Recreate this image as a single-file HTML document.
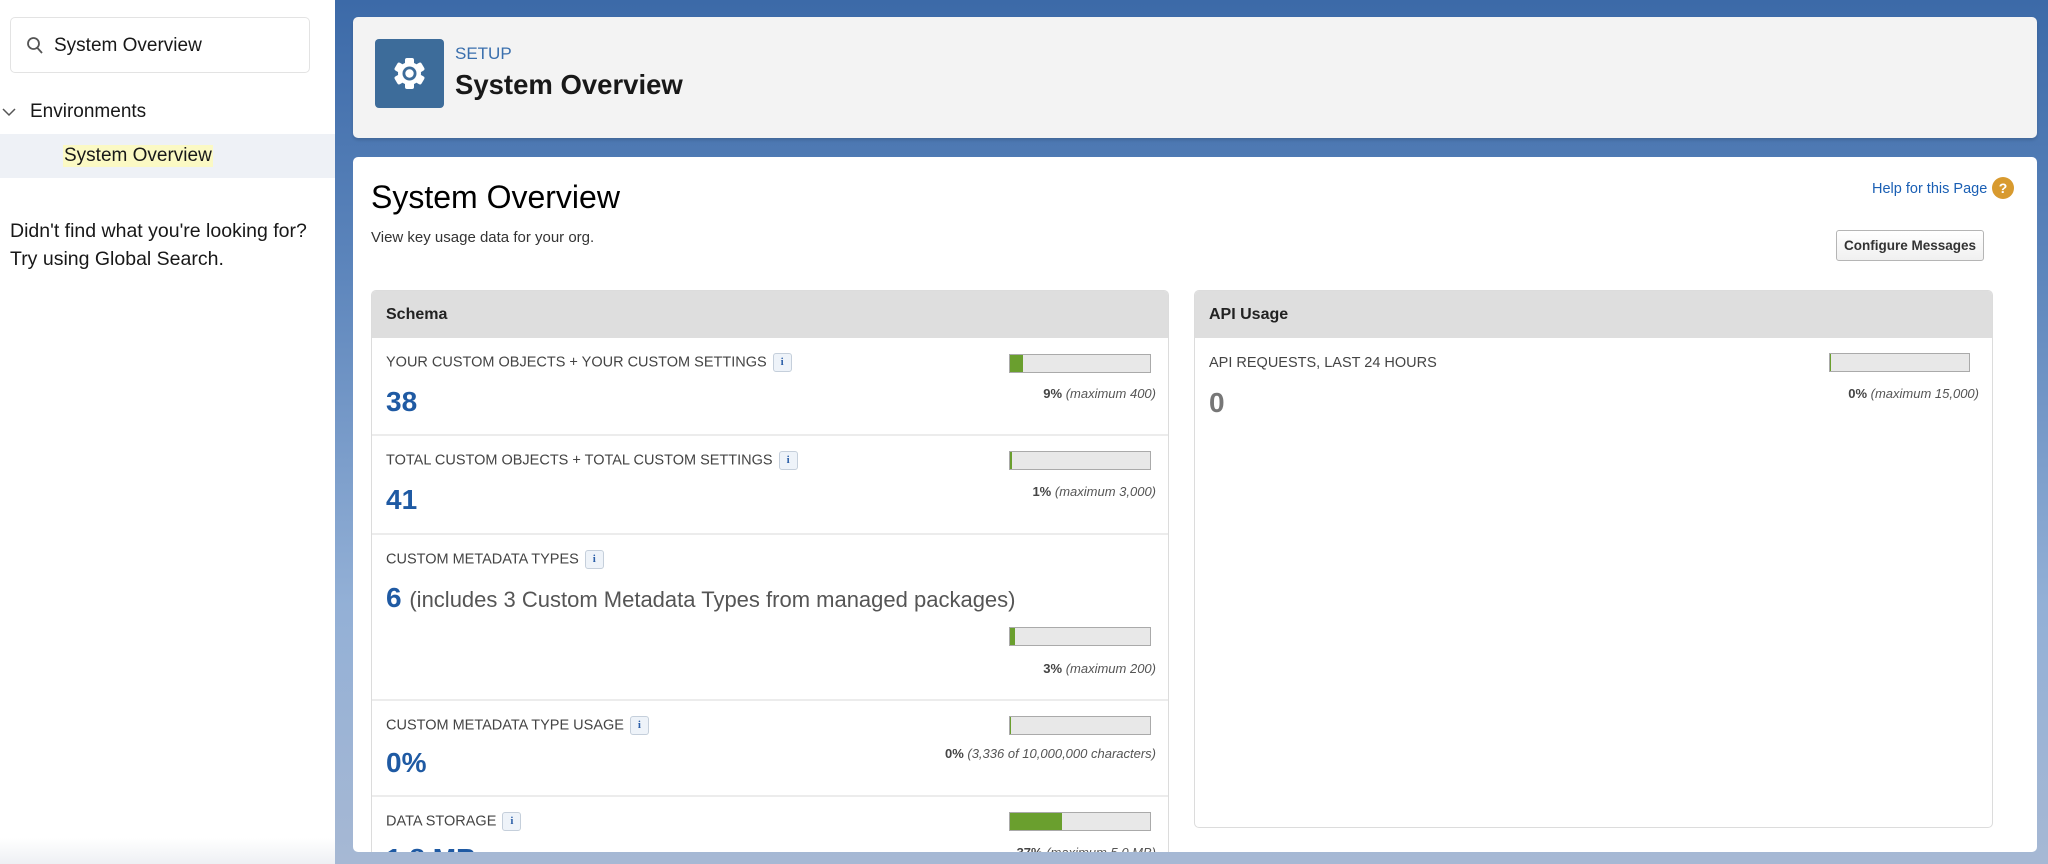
<!DOCTYPE html>
<html><head><meta charset="utf-8"><style>
*{box-sizing:border-box;margin:0;padding:0}
body{width:2048px;height:864px;overflow:hidden;font-family:"Liberation Sans",sans-serif;background:#fff;position:relative}
.side{position:absolute;left:0;top:0;width:335px;height:864px;background:#fff}
.search{position:absolute;left:10px;top:17px;width:300px;height:56px;border:1px solid #e3e3e3;border-radius:5px}
.search span{position:absolute;left:43px;top:17px;font-size:19px;color:#181818}
.env{position:absolute;left:30px;top:101px;font-size:19px;color:#181818}
.sel{position:absolute;left:0;top:134px;width:335px;height:44px;background:#eef1f6}
.sel span{position:absolute;left:63px;top:11px;font-size:19px;color:#181818;background:#fbf9c4;padding:0 1px}
.didnt{position:absolute;left:10px;top:217px;font-size:19.5px;line-height:28px;color:#181818}
.bg{position:absolute;left:335px;top:0;width:1713px;height:864px;background:linear-gradient(#3c6aa8 0%,#5b84bb 30%,#93b0d6 70%,#a6b8d4 100%)}
.hdr{position:absolute;left:353px;top:17px;width:1684px;height:121px;background:#f3f3f3;border-radius:5px;box-shadow:0 2px 3px rgba(0,0,0,.15)}
.gear{position:absolute;left:22px;top:22px;width:69px;height:69px;background:#3d6c9a;border-radius:4px}
.setup{position:absolute;left:102px;top:27px;font-size:17px;color:#3a6fad}
.htitle{position:absolute;left:102px;top:52px;font-size:27.5px;font-weight:bold;color:#181818}
.card{position:absolute;left:353px;top:157px;width:1684px;height:695px;background:#fff;border-radius:5px;overflow:hidden}
.h1{position:absolute;left:18px;top:22px;font-size:32px;color:#000}
.sub{position:absolute;left:18px;top:72px;font-size:15px;color:#333}
.help{position:absolute;left:1519px;top:24px;font-size:14.5px;color:#1a5fb4}
.q{position:absolute;left:1639px;top:20px;width:22px;height:22px;border-radius:50%;background:#d89a2f;color:#fff;font-size:14px;font-weight:bold;text-align:center;line-height:22px}
.btn{position:absolute;left:1483px;top:73px;width:148px;height:31px;border:1px solid #b5b5b5;border-radius:3px;background:linear-gradient(#fff,#f0f0f0);font-size:13.5px;font-weight:bold;color:#333;text-align:center;line-height:29px}
.panel{position:absolute;border:1px solid #dcdcdc;border-radius:5px;background:#fff;overflow:hidden}
.ph{height:47px;background:#dedede;font-size:16px;font-weight:bold;color:#222;padding:15px 14px}
.row{position:relative;border-bottom:2px solid #ececec}
.lbl{position:absolute;left:14px;font-size:14.5px;color:#444}
.ib{display:inline-block;width:19px;height:19px;border:1px solid #c5cfdb;border-radius:3px;background:#eef3f9;color:#2c5fa8;font-size:11px;font-family:"Liberation Serif",serif;font-weight:bold;text-align:center;line-height:17px;vertical-align:middle;margin-left:6px}
.num{position:absolute;left:14px;font-size:28px;font-weight:bold;color:#1f5aa3}
.bar{position:absolute;left:637px;width:142px;height:19px;border:1px solid #aaa;background:#e8e8e8}
.bar i{display:block;height:100%;background:#6a9f2e}
.pct{position:absolute;right:12px;font-size:13px;color:#555;font-style:italic}
.pct b{font-style:normal;color:#444}
.bot{position:absolute;left:0;top:838px;width:335px;height:26px;background:linear-gradient(rgba(255,255,255,0),#eef0f4)}
</style></head><body>
<div class="side">
<div class="search"><svg style="position:absolute;left:15px;top:18px" width="18" height="20" viewBox="0 0 18 20"><circle cx="7.5" cy="7.5" r="5.5" fill="none" stroke="#555" stroke-width="1.8"/><line x1="11.5" y1="12" x2="16" y2="17" stroke="#555" stroke-width="1.8"/></svg><span>System Overview</span></div>
<svg style="position:absolute;left:2px;top:107px" width="14" height="10" viewBox="0 0 14 10"><path d="M1 2l6 6 6-6" fill="none" stroke="#555" stroke-width="1.5"/></svg>
<div class="env">Environments</div>
<div class="sel"><span>System Overview</span></div>
<div class="didnt">Didn't find what you're looking for?<br>Try using Global Search.</div>
<div class="bot"></div>
</div>
<div class="bg"></div>
<div class="hdr">
<div class="gear"><svg width="69" height="69" viewBox="0 0 69 69"><g transform="translate(34.5,34.5)" fill="#fff"><circle r="11.5"/><rect x="-4.5" y="-15.5" width="9" height="31" rx="2"/><rect x="-4.5" y="-15.5" width="9" height="31" rx="2" transform="rotate(60)"/><rect x="-4.5" y="-15.5" width="9" height="31" rx="2" transform="rotate(120)"/><circle r="7" fill="#3d6c9a"/><circle r="4.2" fill="#fff"/></g></svg></div>
<div class="setup">SETUP</div>
<div class="htitle">System Overview</div>
</div>
<div class="card">
<div class="h1">System Overview</div>
<div class="sub">View key usage data for your org.</div>
<div class="help">Help for this Page</div><div class="q">?</div>
<div class="btn">Configure Messages</div>
<div class="panel" style="left:18px;top:133px;width:798px;height:580px">
<div class="ph">Schema</div>
<div class="row" style="height:98px"><div class="lbl" style="top:15px">YOUR CUSTOM OBJECTS + YOUR CUSTOM SETTINGS<span class="ib">i</span></div><div class="num" style="top:48px">38</div><div class="bar" style="top:16px"><i style="width:9%"></i></div><div class="pct" style="top:48px"><b>9%</b> (maximum 400)</div></div>
<div class="row" style="height:99px"><div class="lbl" style="top:15px">TOTAL CUSTOM OBJECTS + TOTAL CUSTOM SETTINGS<span class="ib">i</span></div><div class="num" style="top:48px">41</div><div class="bar" style="top:15px"><i style="width:1.5%"></i></div><div class="pct" style="top:48px"><b>1%</b> (maximum 3,000)</div></div>
<div class="row" style="height:166px"><div class="lbl" style="top:15px">CUSTOM METADATA TYPES<span class="ib">i</span></div><div class="num" style="top:47px">6 <span style="font-weight:normal;color:#555;font-size:22px">(includes 3 Custom Metadata Types from managed packages)</span></div><div class="bar" style="top:92px"><i style="width:3.5%"></i></div><div class="pct" style="top:126px"><b>3%</b> (maximum 200)</div></div>
<div class="row" style="height:96px"><div class="lbl" style="top:15px">CUSTOM METADATA TYPE USAGE<span class="ib">i</span></div><div class="num" style="top:46px">0%</div><div class="bar" style="top:15px"><i style="width:1%"></i></div><div class="pct" style="top:45px"><b>0%</b> (3,336 of 10,000,000 characters)</div></div>
<div class="row" style="height:100px;border:0"><div class="lbl" style="top:15px">DATA STORAGE<span class="ib">i</span></div><div class="num" style="top:46px">1.8 MB</div><div class="bar" style="top:15px"><i style="width:37%"></i></div><div class="pct" style="top:48px"><b>37%</b> (maximum 5.0 MB)</div></div>
</div>
<div class="panel" style="left:841px;top:133px;width:799px;height:538px">
<div class="ph">API Usage</div>
<div class="lbl" style="top:64px;position:absolute">API REQUESTS, LAST 24 HOURS</div>
<div class="num" style="top:96px;color:#777">0</div>
<div class="bar" style="top:62px;left:634px;width:141px"><i style="width:1%"></i></div>
<div class="pct" style="top:95px;right:13px"><b>0%</b> (maximum 15,000)</div>
</div>
</div>
</body></html>
